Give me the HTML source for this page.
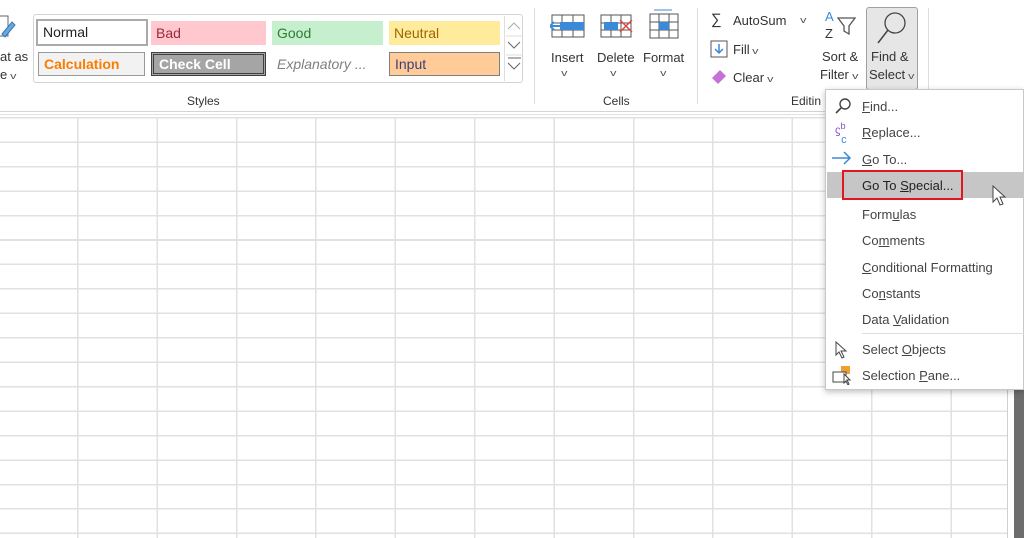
<!DOCTYPE html>
<html><head><meta charset="utf-8"><style>
*{margin:0;padding:0;box-sizing:border-box}
body{width:1024px;height:538px;overflow:hidden;background:#fff;font-family:"Liberation Sans",sans-serif;position:relative;color:#222}
.abs{position:absolute}
.ribbon{left:0;top:0;width:1024px;height:112px;background:#fff;border-bottom:1px solid #d4d4d4}
.grid2{left:0;top:117px;width:1007px;height:421px;
background-image:repeating-linear-gradient(to right,transparent 0 77px,#e1e1e1 77px 78.5px,transparent 78.5px 79.4px),repeating-linear-gradient(to bottom,#e1e1e1 0 1.5px,transparent 1.5px 24.45px);}
.sty{position:absolute;height:24px;font-size:14px;line-height:24px;padding-left:5px}
.t{position:absolute;font-size:13px;color:#333;white-space:nowrap}
.menu{left:825px;top:89px;width:199px;height:301px;background:#fff;border:1px solid #c8c8c8;box-shadow:0 2px 6px rgba(0,0,0,.25)}
.mi{position:absolute;left:36px;font-size:13px;color:#444;white-space:nowrap}
.cv{font-size:9px;transform:scaleX(1.4);display:inline-block;color:#555}
</style></head><body>
<div class="abs ribbon"></div>
<div class="abs grid2"></div>
<div class="abs" style="left:0;top:114px;width:1007px;height:1px;background:#e1e1e1"></div>
<div class="abs" style="left:1007px;top:113px;width:1px;height:425px;background:#d0d0d0"></div>
<div class="abs" style="left:1014px;top:390px;width:10px;height:148px;background:#6d6d6d"></div>

<svg class="abs" style="left:0;top:14px" width="16" height="26"><path d="M0 2h8v20H0" fill="none" stroke="#666"/><path d="M2 20l10-12 3 3-10 12z" fill="#6aa7de" stroke="#3a78b5"/></svg>
<div class="t" style="left:0;top:49px">at as</div>
<div class="t" style="left:0;top:67px">e <span class="cv">v</span></div>

<div class="abs" style="left:33px;top:14px;width:490px;height:69px;border:1px solid #d4d4d4;border-radius:3px"></div>
<div class="sty" style="left:36px;top:19px;width:112px;height:27px;border:2px solid #aaa;background:#fff;color:#222;line-height:23px">Normal</div>
<div class="sty" style="left:151px;top:21px;width:115px;background:#ffc7ce;color:#9c2a38">Bad</div>
<div class="sty" style="left:272px;top:21px;width:111px;background:#c6efce;color:#2e7d32">Good</div>
<div class="sty" style="left:389px;top:21px;width:111px;background:#ffeb9c;color:#9c6500">Neutral</div>
<div class="sty" style="left:38px;top:52px;width:107px;background:#f2f2f2;border:1px solid #999;color:#fa7d00;font-weight:bold;line-height:22px">Calculation</div>
<div class="sty" style="left:151px;top:52px;width:115px;background:#a5a5a5;border:3px double #3f3f3f;color:#fff;font-weight:bold;line-height:18px">Check Cell</div>
<div class="sty" style="left:272px;top:52px;width:112px;color:#7f7f7f;font-style:italic">Explanatory ...</div>
<div class="sty" style="left:389px;top:52px;width:111px;background:#ffcc99;border:1px solid #7f7f7f;color:#3f3f76;line-height:22px">Input</div>
<div class="abs" style="left:504px;top:16px;width:18px;height:65px;border-left:1px solid #ddd"></div>
<svg class="abs" style="left:505px;top:16px" width="18" height="66"><path d="M3 13l6-6 6 6" fill="none" stroke="#aaa"/><path d="M3 42h13M3 47l6 6 6-6" fill="none" stroke="#666"/><path d="M3 26l6 6 6-6" fill="none" stroke="#666"/><path d="M1 20h16M1 39h16" stroke="#ddd"/></svg>
<div class="t" style="left:187px;top:94px;font-size:12px">Styles</div>
<div class="abs" style="left:534px;top:8px;width:1px;height:96px;background:#ddd"></div>

<svg class="abs" style="left:550px;top:14px" width="36" height="26"><rect x="2" y="1" width="32" height="22" fill="none" stroke="#555"/><path d="M2 9h32M2 16h32M12 1v22M23 1v22" stroke="#555"/><rect x="10" y="8" width="24" height="8" fill="#3b8ad9"/><path d="M0 12h12M4 8l-4 4 4 4" stroke="#3b8ad9" fill="none" stroke-width="2"/></svg>
<div class="t" style="left:551px;top:50px">Insert</div><div class="t" style="left:562px;top:64px"><span class="cv">v</span></div>
<svg class="abs" style="left:600px;top:14px" width="34" height="26"><rect x="1" y="1" width="30" height="22" fill="none" stroke="#555"/><path d="M1 9h30M1 16h30M11 1v22M21 1v22" stroke="#555"/><rect x="4" y="8" width="14" height="8" fill="#3b8ad9"/><path d="M20 6l12 12M32 6L20 18" stroke="#e0443e" stroke-width="1.5"/></svg>
<div class="t" style="left:597px;top:50px">Delete</div><div class="t" style="left:611px;top:64px"><span class="cv">v</span></div>
<svg class="abs" style="left:648px;top:8px" width="32" height="32"><path d="M6 2h18" stroke="#3b8ad9"/><rect x="2" y="6" width="28" height="24" fill="none" stroke="#555"/><path d="M2 14h28M2 22h28M11 6v24M21 6v24" stroke="#555"/><rect x="11" y="14" width="10" height="8" fill="#3b8ad9"/></svg>
<div class="t" style="left:643px;top:50px">Format</div><div class="t" style="left:661px;top:64px"><span class="cv">v</span></div>
<div class="t" style="left:603px;top:94px;font-size:12px">Cells</div>
<div class="abs" style="left:697px;top:8px;width:1px;height:96px;background:#ddd"></div>

<div class="t" style="left:711px;top:11px;font-size:15px">∑</div>
<div class="t" style="left:733px;top:13px">AutoSum</div><div class="t" style="left:801px;top:11px"><span class="cv">v</span></div>
<svg class="abs" style="left:710px;top:40px" width="18" height="18"><rect x="1" y="1" width="16" height="16" fill="none" stroke="#555"/><path d="M9 4v9M5 9l4 4 4-4" stroke="#3b8ad9" fill="none" stroke-width="1.5"/></svg>
<div class="t" style="left:733px;top:42px">Fill <span class="cv">v</span></div>
<svg class="abs" style="left:710px;top:68px" width="18" height="18"><path d="M2 10l8-8 6 6-8 8z" fill="#c671d8"/></svg>
<div class="t" style="left:733px;top:70px">Clear <span class="cv">v</span></div>
<div class="t" style="left:825px;top:9px;color:#3b8ad9;font-size:13px">A</div>
<div class="t" style="left:825px;top:26px;font-size:13px">Z</div>
<svg class="abs" style="left:837px;top:16px" width="20" height="20"><path d="M1 2h17l-6 8v8l-5-3v-5z" fill="none" stroke="#555" stroke-width="1.3"/></svg>
<div class="t" style="left:822px;top:49px">Sort &amp;</div>
<div class="t" style="left:820px;top:67px">Filter <span class="cv">v</span></div>
<div class="abs" style="left:866px;top:7px;width:52px;height:83px;background:#e6e6e6;border:1px solid #a0a0a0;border-radius:3px"></div>
<svg class="abs" style="left:874px;top:10px" width="36" height="36"><circle cx="21" cy="13" r="10" fill="none" stroke="#444" stroke-width="1.3"/><path d="M14 20L4 33" stroke="#444" stroke-width="1.5"/></svg>
<div class="t" style="left:871px;top:49px">Find &amp;</div>
<div class="t" style="left:869px;top:67px">Select <span class="cv">v</span></div>
<div class="t" style="left:791px;top:94px;font-size:12px">Editin</div>
<div class="abs" style="left:928px;top:8px;width:1px;height:90px;background:#ddd"></div>

<div class="abs menu">
<svg class="abs" style="left:8px;top:7px" width="18" height="18"><circle cx="11" cy="7" r="5" fill="none" stroke="#444" stroke-width="1.4"/><path d="M7 11l-5 5" stroke="#444" stroke-width="1.6"/></svg>
<div class="mi" style="top:9px"><u>F</u>ind...</div>
<div class="abs" style="left:9px;top:32px;font-size:11px;color:#8a4fd0;line-height:9px">ϛ<sup>b</sup><br>&nbsp;&nbsp;<span style="color:#3b8ad9">c</span></div>
<div class="mi" style="top:35px"><u>R</u>eplace...</div>
<svg class="abs" style="left:5px;top:61px" width="22" height="14"><path d="M1 7h18M13 1l6 6-6 6" fill="none" stroke="#3b8ad9" stroke-width="1.5"/></svg>
<div class="mi" style="top:62px"><u>G</u>o To...</div>
<div class="abs" style="left:1px;top:82px;width:197px;height:26px;background:#c6c6c6"></div>
<div class="abs" style="left:16px;top:80px;width:121px;height:30px;border:2px solid #e3161f"></div>
<div class="mi" style="top:88px;color:#222">Go To <u>S</u>pecial...</div>
<svg class="abs" style="left:165px;top:95px" width="16" height="22"><path d="M2 1v16l4-4 3 7 3-1-3-7h5z" fill="#fff" stroke="#444"/></svg>
<div class="mi" style="top:117px">Form<u>u</u>las</div>
<div class="mi" style="top:143px">Co<u>m</u>ments</div>
<div class="mi" style="top:170px"><u>C</u>onditional Formatting</div>
<div class="mi" style="top:196px">Co<u>n</u>stants</div>
<div class="mi" style="top:222px">Data <u>V</u>alidation</div>
<div class="abs" style="left:36px;top:243px;width:162px;height:1px;background:#ddd"></div>
<svg class="abs" style="left:8px;top:251px" width="14" height="18"><path d="M2 1v13l3-3 3 6 2-1-3-6h5z" fill="#fff" stroke="#444"/></svg>
<div class="mi" style="top:252px">Select <u>O</u>bjects</div>
<svg class="abs" style="left:5px;top:275px" width="22" height="20"><rect x="10" y="1" width="9" height="8" fill="#f0a030"/><rect x="2" y="7" width="13" height="10" fill="#fff" stroke="#444"/><path d="M13 9v9l2-2 2 4 1-1-2-4h3z" fill="#fff" stroke="#444"/></svg>
<div class="mi" style="top:278px">Selection <u>P</u>ane...</div>
</div>
</body></html>
